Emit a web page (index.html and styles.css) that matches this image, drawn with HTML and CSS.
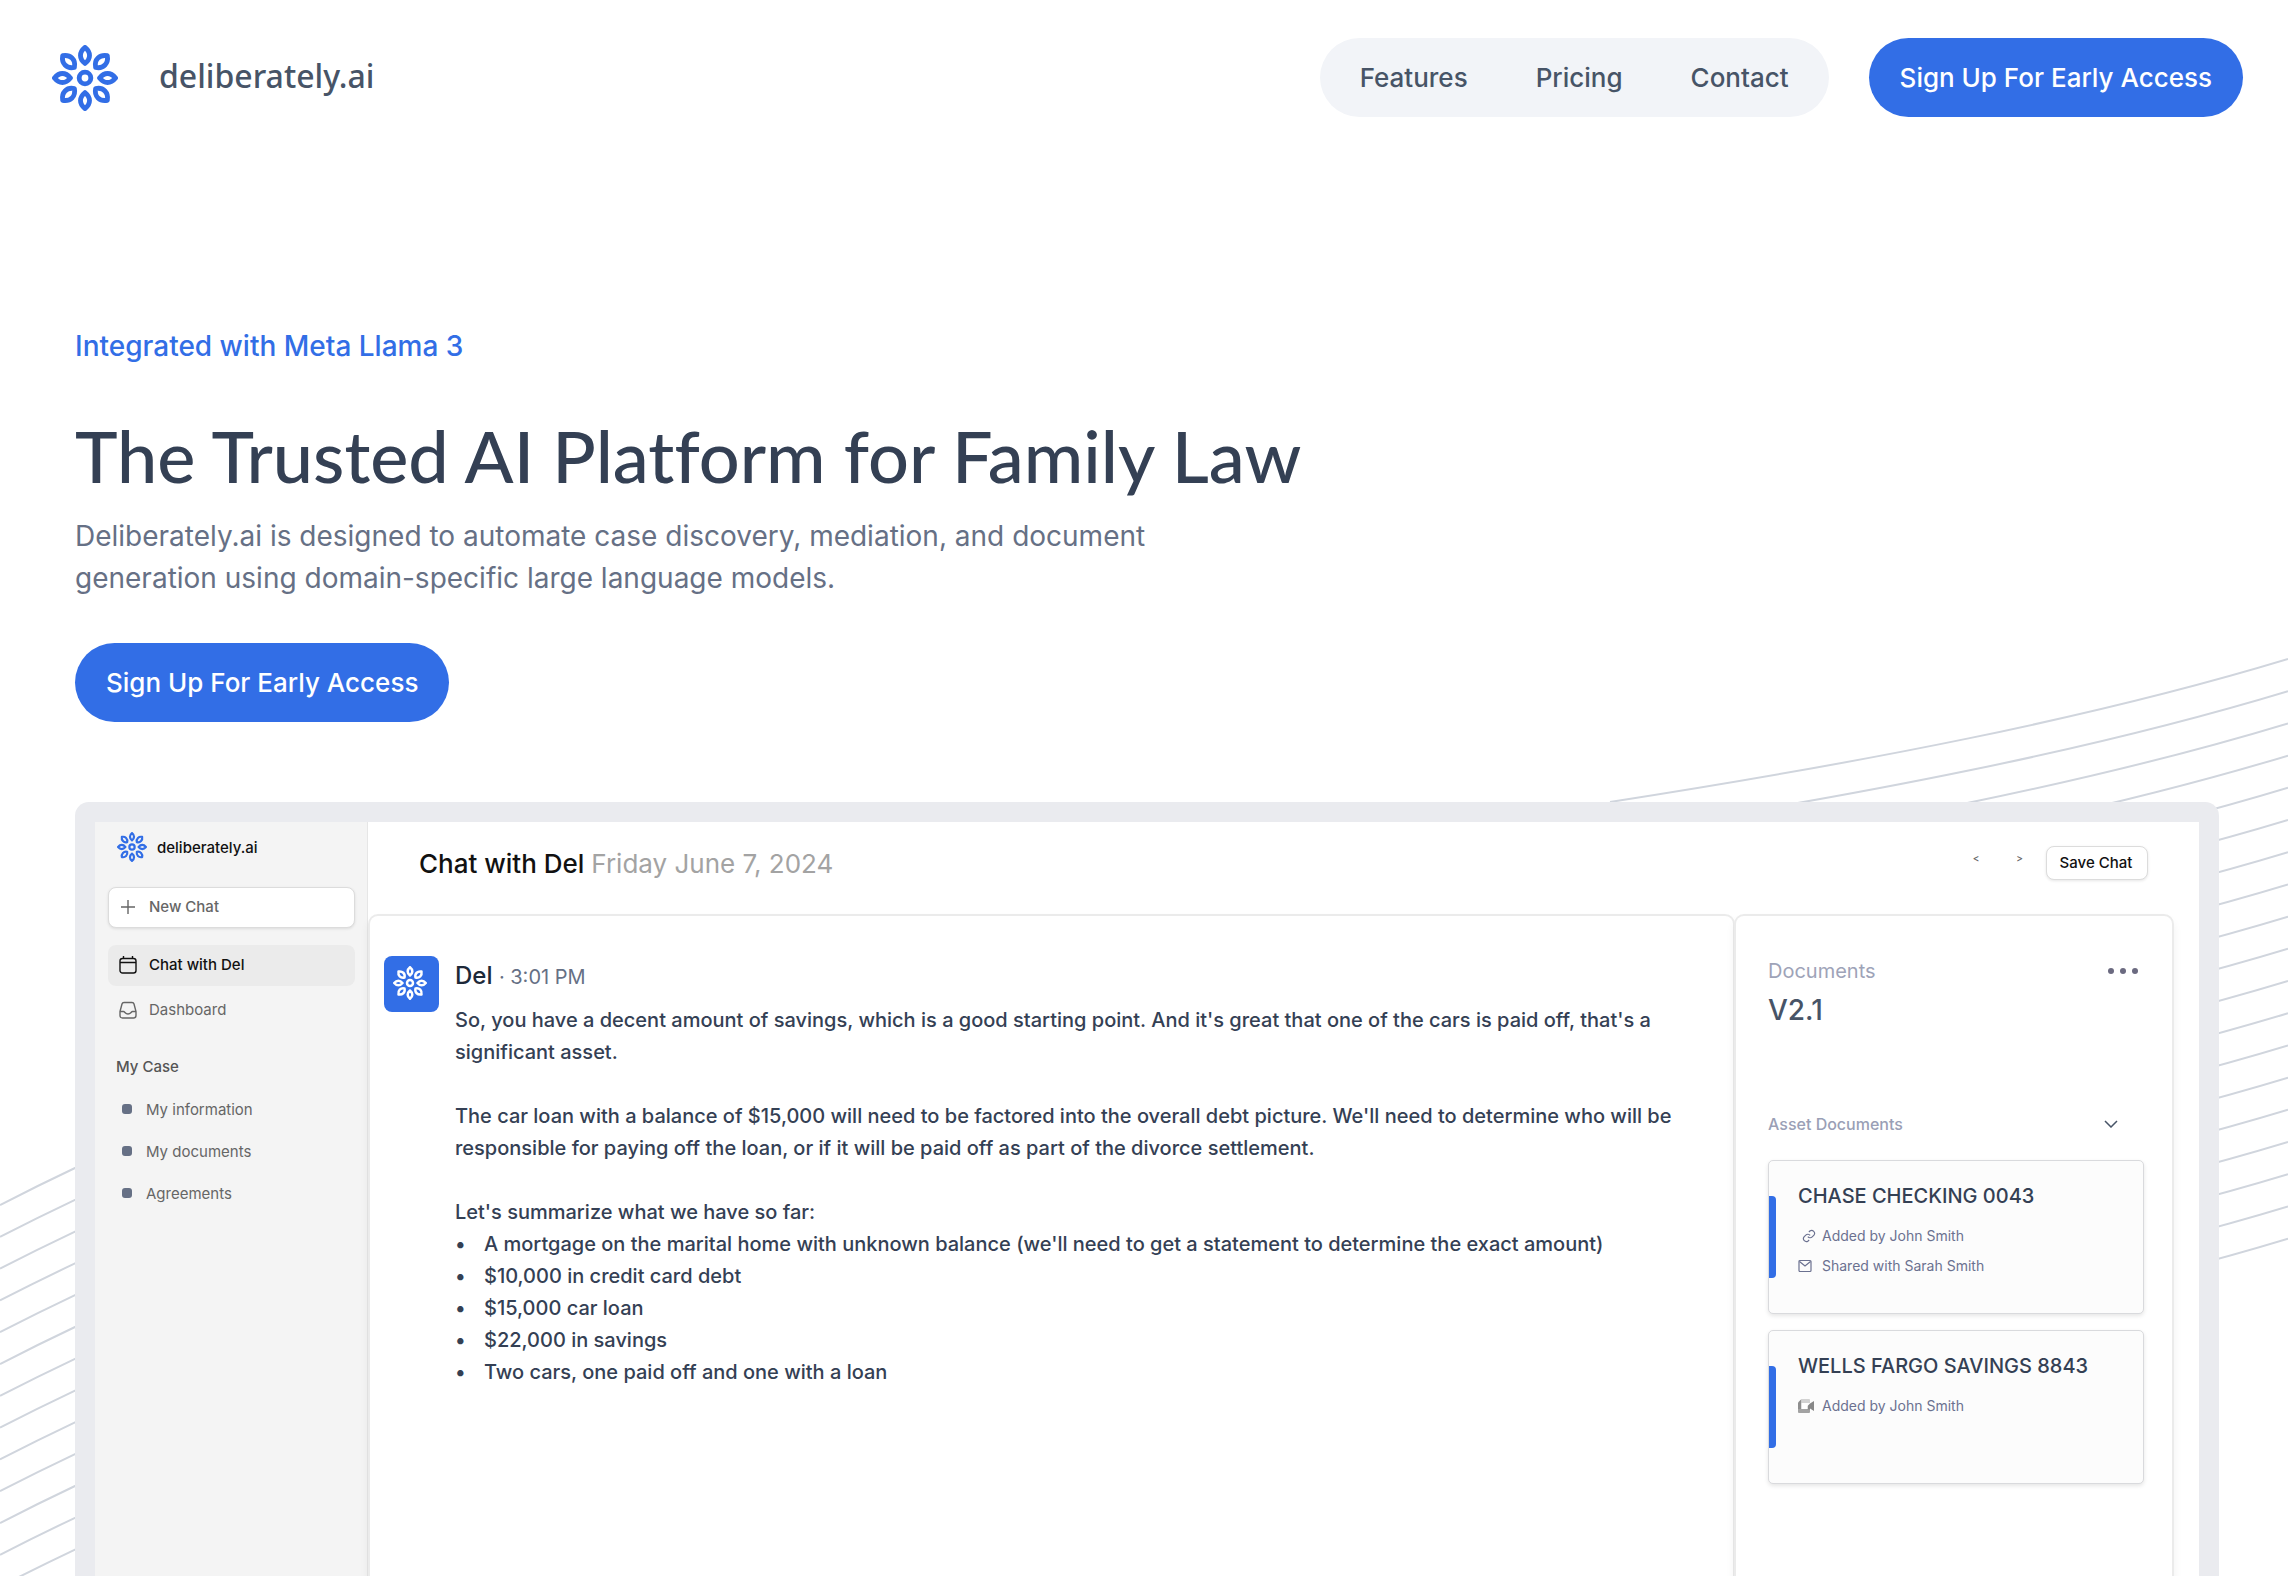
FILE: index.html
```html
<!DOCTYPE html>
<html lang="en">
<head>
<meta charset="utf-8">
<meta name="viewport" content="width=device-width, initial-scale=1">
<title>deliberately.ai</title>
<link rel="stylesheet" href="styles.css">
</head>
<body>
<svg class="defs" aria-hidden="true">
  <symbol id="flower" viewBox="-34 -34 68 68">
    <g fill="none" stroke="currentColor" stroke-width="5" stroke-linejoin="round">
      <circle r="6"/>
      <g id="petals">
        <path id="petal" d="M0 -31.500C6.200 -26.500 6.200 -20 0 -15C-6.200 -20 -6.200 -26.500 0 -31.500Z"/>
        <use href="#petal" transform="rotate(90)"/>
        <use href="#petal" transform="rotate(180)"/>
        <use href="#petal" transform="rotate(270)"/>
      </g>
      <path id="leaf" d="M0 -32.500C6.500 -28 7 -20 0 -15.500C-7 -20 -6.500 -28 0 -32.500Z" transform="rotate(45)"/>
      <use href="#leaf" transform="rotate(90)"/>
      <use href="#leaf" transform="rotate(180)"/>
      <use href="#leaf" transform="rotate(270)"/>
    </g>
  </symbol>
</svg>

<header class="site-header">
  <a class="brand" href="#">
    <svg class="brand-mark"><use href="#flower"/></svg>
    <span>deliberately.ai</span>
  </a>
  <nav class="site-nav">
    <a href="#">Features</a>
    <a href="#">Pricing</a>
    <a href="#">Contact</a>
  </nav>
  <button class="cta" type="button">Sign Up For Early Access</button>
</header>

<main class="page">
  <section class="hero">
    <p class="tag">Integrated with Meta Llama 3</p>
    <h1>The Trusted AI Platform for Family Law</h1>
    <p class="lead">Deliberately.ai is designed to automate case discovery, mediation, and document generation using domain-specific large language models.</p>
    <button class="cta" type="button">Sign Up For Early Access</button>
  </section>

  <div class="showcase">
    <svg class="waves" viewBox="0 0 2288 940" aria-hidden="true">
      <g fill="none" stroke="#d0d5dd" stroke-width="2">
        <path id="wl" d="M0 563Q37 544 75 526L200 468"/>
        <use href="#wl" y="31.800"/><use href="#wl" y="63.600"/><use href="#wl" y="95.400"/><use href="#wl" y="127.200"/>
        <use href="#wl" y="159"/><use href="#wl" y="190.800"/><use href="#wl" y="222.600"/><use href="#wl" y="254.400"/>
        <use href="#wl" y="286.200"/><use href="#wl" y="318"/><use href="#wl" y="349.800"/><use href="#wl" y="381.600"/>
        <path id="wr" d="M1610 160C1860 121 2090 77 2288 17"/>
        <use href="#wr" y="32.200"/><use href="#wr" y="64.400"/><use href="#wr" y="96.600"/><use href="#wr" y="128.800"/>
        <use href="#wr" y="161"/><use href="#wr" y="193.200"/><use href="#wr" y="225.400"/><use href="#wr" y="257.600"/>
        <use href="#wr" y="289.800"/><use href="#wr" y="322"/><use href="#wr" y="354.200"/><use href="#wr" y="386.400"/>
        <use href="#wr" y="418.600"/><use href="#wr" y="450.800"/><use href="#wr" y="483"/><use href="#wr" y="515.200"/>
        <use href="#wr" y="547.400"/><use href="#wr" y="579.600"/>
      </g>
    </svg>

    <div class="frame">
      <div class="app">
        <aside class="sidebar">
          <div class="side-brand">
            <svg class="side-mark"><use href="#flower"/></svg>
            <span>deliberately.ai</span>
          </div>
          <button class="side-item new-chat" type="button">
            <svg viewBox="0 0 18 18"><path d="M9 2v14M2 9h14"/></svg>New Chat
          </button>
          <a class="side-item active" href="#">
            <svg viewBox="0 0 18 18"><rect x="1" y="2.500" width="16" height="14.500" rx="2.500"/><path d="M1 6.500h16M4.500 0v2.500M13.500 0v2.500"/></svg>Chat with Del
          </a>
          <a class="side-item quiet" href="#">
            <svg viewBox="0 0 18 18"><path d="M1 10.500L3 3Q3.400 1.500 5 1.500H13Q14.600 1.500 15 3L17 10.500V14.500Q17 17 14.500 17H3.500Q1 17 1 14.500ZM1 10.500H4.500C6 10.500 6 13 9 13S12 10.500 13.500 10.500H17"/></svg>Dashboard
          </a>
          <h2 class="side-title">My Case</h2>
          <ul class="case-list">
            <li><a href="#">My information</a></li>
            <li><a href="#">My documents</a></li>
            <li><a href="#">Agreements</a></li>
          </ul>
        </aside>

        <section class="workspace">
          <div class="topbar">
            <h2 class="chat-title">Chat with Del <span>Friday June 7, 2024</span></h2>
            <button class="step" type="button" aria-label="Previous">&lt;</button>
            <button class="step" type="button" aria-label="Next">&gt;</button>
            <button class="save" type="button">Save Chat</button>
          </div>

          <div class="cards">
            <article class="chat">
              <div class="avatar"><svg><use href="#flower"/></svg></div>
              <div class="message">
                <p class="author">Del <span>· 3:01 PM</span></p>
                <p>So, you have a decent amount of savings, which is a good starting point. And it's great that one of the cars is paid off, that's a significant asset.</p>
                <p>The car loan with a balance of $15,000 will need to be factored into the overall debt picture. We'll need to determine who will be responsible for paying off the loan, or if it will be paid off as part of the divorce settlement.</p>
                <p class="list-intro">Let's summarize what we have so far:</p>
                <ul>
                  <li>A mortgage on the marital home with unknown balance (we'll need to get a statement to determine the exact amount)</li>
                  <li>$10,000 in credit card debt</li>
                  <li>$15,000 car loan</li>
                  <li>$22,000 in savings</li>
                  <li>Two cars, one paid off and one with a loan</li>
                </ul>
              </div>
            </article>

            <aside class="docs">
              <div class="docs-head">
                <span>Documents</span>
                <button class="more" type="button" aria-label="More">
                  <svg width="32" height="8" viewBox="0 0 32 8"><circle cx="4" cy="4" r="3"/><circle cx="16" cy="4" r="3"/><circle cx="28" cy="4" r="3"/></svg>
                </button>
              </div>
              <p class="version">V2.1</p>
              <div class="docs-group">
                <h3>Asset Documents</h3>
                <svg width="14" height="8" viewBox="0 0 14 8"><path d="M1 1l6 6 6-6"/></svg>
              </div>
              <section class="doc">
                <h4>CHASE CHECKING 0043</h4>
                <p><svg class="link-icon" viewBox="0 0 24 24"><path d="M10 13a5 5 0 0 0 7.500.5l3-3a5 5 0 0 0-7-7l-1.700 1.700M14 11a5 5 0 0 0-7.500-.5l-3 3a5 5 0 0 0 7 7l1.700-1.700"/></svg>Added by John Smith</p>
                <p><svg viewBox="0 0 14 14"><rect x="1" y="1.500" width="12" height="11" rx="1"/><path d="M1.500 2.500L7 7l5.500-4.500"/></svg>Shared with Sarah Smith</p>
              </section>
              <section class="doc">
                <h4>WELLS FARGO SAVINGS 8843</h4>
                <p><svg class="meet-icon" viewBox="0 0 16 14"><path fill="#8e8e8e" d="M0 3.500L3.500 0V10H0Z"/><path fill="#d2d2d2" d="M3.500 0H11Q12 0 12 1V4H3.500Z"/><path fill="#a3a3a3" d="M0 10H12V13Q12 14 11 14H1Q0 14 0 13Z"/><path fill="#888" d="M9.500 7L12 4.500L16 2V12L12 9.500V10.500H9.500Z"/><path fill="#fff" d="M3.500 4H9.500V10H3.500Z"/></svg>Added by John Smith</p>
              </section>
            </aside>
          </div>
        </section>
      </div>
    </div>
  </div>
</main>
</body>
</html>
```
FILE: styles.css
```css
* { box-sizing: border-box; }

body {
  margin: 0;
  height: 100vh;
  display: flex;
  flex-direction: column;
  overflow: hidden;
  background: #fff;
  color: #344054;
  font-family: Inter, "Liberation Sans", sans-serif;
  font-weight: 500;
}

h1, h2, h3, h4, p, ul { margin: 0; padding: 0; font-weight: 500; }
ul { list-style: none; }
a { color: inherit; text-decoration: none; }
button { font: inherit; color: inherit; border: 0; padding: 0; background: none; cursor: pointer; }
.defs { position: absolute; width: 0; height: 0; }

/* Header */
.site-header {
  display: flex;
  align-items: center;
  gap: 40px;
  padding: 38px 45px 0 52px;
}
.brand {
  display: flex;
  align-items: center;
  gap: 41px;
  margin-right: auto;
  color: #475467;
  font-family: "Noto Sans", sans-serif;
  font-size: 32px;
  line-height: 40px;
}
.brand span { padding-bottom: 4px; }
.brand-mark { width: 66px; height: 66px; color: #326ee6; }
.site-nav {
  display: flex;
  align-items: center;
  gap: 68px;
  height: 79px;
  padding: 0 40px;
  border-radius: 40px;
  background: #f2f4f8;
  color: #475467;
  font-size: 26px;
}
.cta {
  height: 79px;
  padding: 0 31px;
  border-radius: 40px;
  background: #326ee6;
  color: #fff;
  font-size: 26px;
  white-space: nowrap;
}

/* Hero */
.page {
  flex: 1;
  min-height: 0;
  display: flex;
  flex-direction: column;
  padding-top: 208px;
}
.hero { padding: 0 75px; }
.tag { color: #326ee6; font-size: 28px; line-height: 42px; }
.hero h1 {
  margin-top: 44px;
  font-family: Lato, Inter, sans-serif;
  font-size: 72px;
  font-variant-ligatures: none;
  line-height: 88px;
}
.lead {
  max-width: 1120px;
  margin: 16px 0 44px;
  color: #667085;
  font-size: 28px;
  font-weight: 400;
  line-height: 42px;
}

/* Product frame */
.showcase {
  position: relative;
  flex: 1;
  min-height: 0;
  display: flex;
  padding: 80px 69px 0 75px;
}
.waves { position: absolute; top: -80px; left: 0; width: 100%; }
.frame {
  position: relative;
  flex: 1;
  display: flex;
  padding: 20px 20px 0;
  border-radius: 14px 14px 0 0;
  background: #eaebef;
}
.app { flex: 1; display: grid; grid-template-columns: 273px 1fr; background: #fff; }

/* Sidebar */
.sidebar {
  padding: 4px 12px 0 13px;
  border-right: 1px solid #e6e6e6;
  background: #f4f4f4;
  color: #666;
  font-size: 15px;
}
.side-brand {
  display: flex;
  align-items: center;
  gap: 10px;
  height: 42px;
  padding-left: 9px;
  margin-bottom: 19px;
  color: #111;
}
.side-mark { width: 30px; height: 30px; color: #326ee6; }
.side-item {
  display: flex;
  align-items: center;
  gap: 12px;
  width: 100%;
  height: 41px;
  padding: 0 10px 2px;
  border: 1px solid transparent;
  border-radius: 8px;
}
.side-item + .side-item { margin-top: 4px; }
.side-item svg { width: 18px; height: 18px; fill: none; stroke: currentColor; stroke-width: 1.4; }
.side-item.new-chat {
  margin-bottom: 17px;
  border-color: #dcdcdc;
  background: #fff;
  box-shadow: 0 1px 3px rgba(0, 0, 0, .1);
}
.side-item.active { margin-top: 0; background: #ebebeb; color: #111; }
.side-item.quiet { font-weight: 400; }
.side-title { margin: 24px 0 9px 8px; color: #555; font-size: 15px; line-height: 24px; }
.case-list a {
  display: flex;
  align-items: center;
  gap: 14px;
  height: 42px;
  padding-left: 14px;
  font-weight: 400;
}
.case-list a::before {
  content: "";
  width: 10px;
  height: 10px;
  border-radius: 3px;
  background: #667085;
}

/* Workspace */
.workspace { display: flex; flex-direction: column; min-width: 0; }
.topbar {
  display: flex;
  align-items: center;
  height: 92px;
  padding: 0 51px 10px;
}
.chat-title { margin-right: auto; color: #111; font-size: 26px; }
.chat-title span { color: #a3a3a3; font-weight: 400; }
.step { margin-right: 37px; padding-bottom: 10px; color: #666; font-size: 10px; }
.step + .save { margin-left: -14px; }
.save {
  width: 102px;
  height: 34px;
  padding: 0 2px 2px 0;
  border: 1px solid #dcdcdc;
  border-radius: 8px;
  background: #fff;
  box-shadow: 0 1px 3px rgba(0, 0, 0, .1);
  color: #111;
  font-size: 15px;
}
.cards { flex: 1; display: grid; grid-template-columns: 1fr 440px; padding-right: 25px; }
.chat, .docs {
  border: 2px solid #ebebeb;
  border-bottom: 0;
  border-radius: 10px 10px 0 0;
  background: #fff;
  box-shadow: 0 6px 10px rgba(0, 0, 0, .06);
}

/* Conversation */
.chat { display: flex; align-items: flex-start; gap: 16px; margin-right: -1px; padding: 40px 40px 0 14px; }
.avatar {
  flex: none;
  display: grid;
  place-items: center;
  width: 55px;
  height: 56px;
  padding: 0 3px 2px 0;
  border-radius: 8px;
  background: #326ee6;
  color: #fff;
}
.avatar svg { width: 34px; height: 34px; }
.message { max-width: 1230px; font-size: 20px; line-height: 32px; }
.message p + p { margin-bottom: 32px; }
.message .author { margin-bottom: 7px; color: #1d2939; font-size: 24px; line-height: 40px; }
.author span { color: #667085; font-size: 20px; font-weight: 400; }
.message .list-intro { margin-bottom: 0; }
.message li { display: flex; }
.message li::before { content: "•"; flex: none; width: 29px; }

/* Documents */
.docs { padding: 40px 28px 0 32px; }
.docs-head {
  display: flex;
  align-items: center;
  justify-content: space-between;
  padding-right: 5px;
  color: #9ea3b8;
  font-size: 20px;
  font-weight: 400;
  line-height: 30px;
}
.more { display: flex; }
.more svg { fill: #6b6a80; }
.version { color: #475467; font-size: 28px; line-height: 48px; }
.docs-group {
  display: flex;
  align-items: center;
  justify-content: space-between;
  margin: 78px 0 24px;
  padding-right: 26px;
  color: #9a9fb6;
}
.docs-group h3 { font-size: 16px; line-height: 24px; }
.docs-group svg { fill: none; stroke: #475467; stroke-width: 1.5; }
.doc {
  position: relative;
  min-height: 154px;
  margin-bottom: 16px;
  padding: 20px 20px 0 29px;
  border: 1px solid #d9dadd;
  border-radius: 5px;
  background: #fcfcfc;
  box-shadow: 0 2px 4px rgba(0, 0, 0, .1);
}
.doc::before {
  content: "";
  position: absolute;
  left: 0;
  top: 35px;
  width: 7px;
  height: 82px;
  border-radius: 0 4px 4px 0;
  background: #326ee6;
}
.doc h4 { margin-bottom: 10px; font-size: 20px; line-height: 30px; }
.doc p {
  display: flex;
  align-items: center;
  gap: 10px;
  color: #6b7190;
  font-size: 14px;
  font-weight: 400;
  line-height: 30px;
}
.doc svg { width: 14px; height: 14px; fill: none; stroke: currentColor; stroke-width: 1.2; }
.doc .link-icon { margin: 0 -4px 0 4px; stroke-width: 2; }
.doc .meet-icon { width: 16px; margin-right: -2px; stroke: none; }
```
